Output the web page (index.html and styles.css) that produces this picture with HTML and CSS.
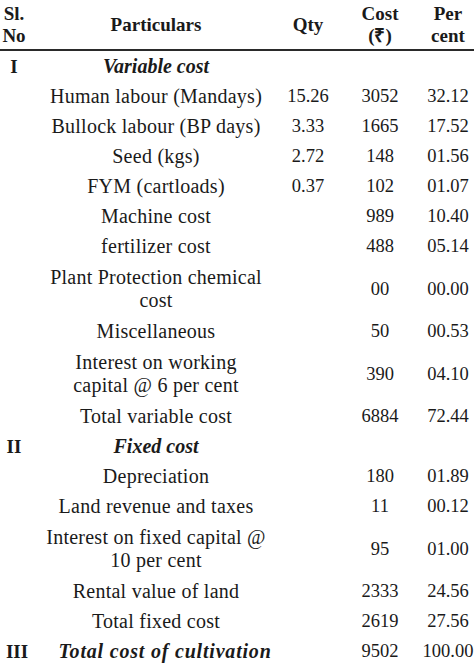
FILE: index.html
```html
<!DOCTYPE html>
<html lang="en">
<head>
<meta charset="utf-8">
<title>Cost of cultivation</title>
<link rel="stylesheet" href="styles.css">
</head>
<body>
<div class="table">
  <div class="row head">
    <div class="cell">Sl.<br>No</div>
    <div class="cell">Particulars</div>
    <div class="cell">Qty</div>
    <div class="cell">Cost<br>(₹)</div>
    <div class="cell">Per<br>cent</div>
  </div>

  <div class="row">
    <div class="cell sl">I</div>
    <div class="cell part group">Variable cost</div>
    <div class="cell"></div><div class="cell"></div><div class="cell"></div>
  </div>
  <div class="row">
    <div class="cell"></div>
    <div class="cell part">Human labour (Mandays)</div>
    <div class="cell num">15.26</div><div class="cell num">3052</div><div class="cell num">32.12</div>
  </div>
  <div class="row">
    <div class="cell"></div>
    <div class="cell part">Bullock labour (BP days)</div>
    <div class="cell num">3.33</div><div class="cell num">1665</div><div class="cell num">17.52</div>
  </div>
  <div class="row">
    <div class="cell"></div>
    <div class="cell part">Seed (kgs)</div>
    <div class="cell num">2.72</div><div class="cell num">148</div><div class="cell num">01.56</div>
  </div>
  <div class="row">
    <div class="cell"></div>
    <div class="cell part">FYM (cartloads)</div>
    <div class="cell num">0.37</div><div class="cell num">102</div><div class="cell num">01.07</div>
  </div>
  <div class="row">
    <div class="cell"></div>
    <div class="cell part">Machine cost</div>
    <div class="cell num"></div><div class="cell num">989</div><div class="cell num">10.40</div>
  </div>
  <div class="row">
    <div class="cell"></div>
    <div class="cell part">fertilizer cost</div>
    <div class="cell num"></div><div class="cell num">488</div><div class="cell num">05.14</div>
  </div>
  <div class="row dbl">
    <div class="cell"></div>
    <div class="cell part">Plant Protection chemical<br>cost</div>
    <div class="cell num"></div><div class="cell num">00</div><div class="cell num">00.00</div>
  </div>
  <div class="row">
    <div class="cell"></div>
    <div class="cell part">Miscellaneous</div>
    <div class="cell num"></div><div class="cell num">50</div><div class="cell num">00.53</div>
  </div>
  <div class="row dbl">
    <div class="cell"></div>
    <div class="cell part">Interest on working<br>capital @ 6 per cent</div>
    <div class="cell num"></div><div class="cell num">390</div><div class="cell num">04.10</div>
  </div>
  <div class="row">
    <div class="cell"></div>
    <div class="cell part">Total variable cost</div>
    <div class="cell num"></div><div class="cell num">6884</div><div class="cell num">72.44</div>
  </div>

  <div class="row">
    <div class="cell sl">II</div>
    <div class="cell part group">Fixed cost</div>
    <div class="cell"></div><div class="cell"></div><div class="cell"></div>
  </div>
  <div class="row">
    <div class="cell"></div>
    <div class="cell part">Depreciation</div>
    <div class="cell num"></div><div class="cell num">180</div><div class="cell num">01.89</div>
  </div>
  <div class="row">
    <div class="cell"></div>
    <div class="cell part">Land revenue and taxes</div>
    <div class="cell num"></div><div class="cell num">11</div><div class="cell num">00.12</div>
  </div>
  <div class="row dbl">
    <div class="cell"></div>
    <div class="cell part">Interest on fixed capital @<br>10 per cent</div>
    <div class="cell num"></div><div class="cell num">95</div><div class="cell num">01.00</div>
  </div>
  <div class="row">
    <div class="cell"></div>
    <div class="cell part">Rental value of land</div>
    <div class="cell num"></div><div class="cell num">2333</div><div class="cell num">24.56</div>
  </div>
  <div class="row">
    <div class="cell"></div>
    <div class="cell part">Total fixed cost</div>
    <div class="cell num"></div><div class="cell num">2619</div><div class="cell num">27.56</div>
  </div>

  <div class="row">
    <div class="cell sl sl-wide">III</div>
    <div class="cell part group grand">Total cost of cultivation</div>
    <div class="cell num"></div><div class="cell num">9502</div><div class="cell num">100.00</div>
  </div>
</div>
</body>
</html>
```

FILE: styles.css
```css
html, body {
  margin: 0;
  padding: 0;
  background: #ffffff;
}

body {
  width: 474px;
  height: 663px;
  overflow: hidden;
  color: #1a1a1a;
  font-family: "Liberation Serif", "Times New Roman", serif;
}

.table {
  display: flex;
  flex-direction: column;
  width: 468px;
}

.row {
  display: grid;
  grid-template-columns: 28px 256px 48px 96px 40px;
  align-items: center;
  padding: 4px 0 3px;
  font-size: 19px;
  line-height: 23px;
}

.row.dbl {
  padding: 5px 0 4px;
}

.cell {
  justify-self: center;
  text-align: center;
  white-space: nowrap;
}

.head {
  width: 474px;
  padding: 3px 0 2px;
  line-height: 22px;
  font-weight: bold;
  border-bottom: 2px solid #2a2a2a;
}

.sl {
  font-weight: bold;
}

.sl-wide {
  margin-left: 6px;
}

.part {
  font-size: 20px;
  letter-spacing: 0.25px;
}

.group {
  font-weight: bold;
  font-style: italic;
  letter-spacing: 0;
}

.grand {
  letter-spacing: 0.8px;
  margin-left: 18px;
}

.num {
  font-size: 18.5px;
}
```
